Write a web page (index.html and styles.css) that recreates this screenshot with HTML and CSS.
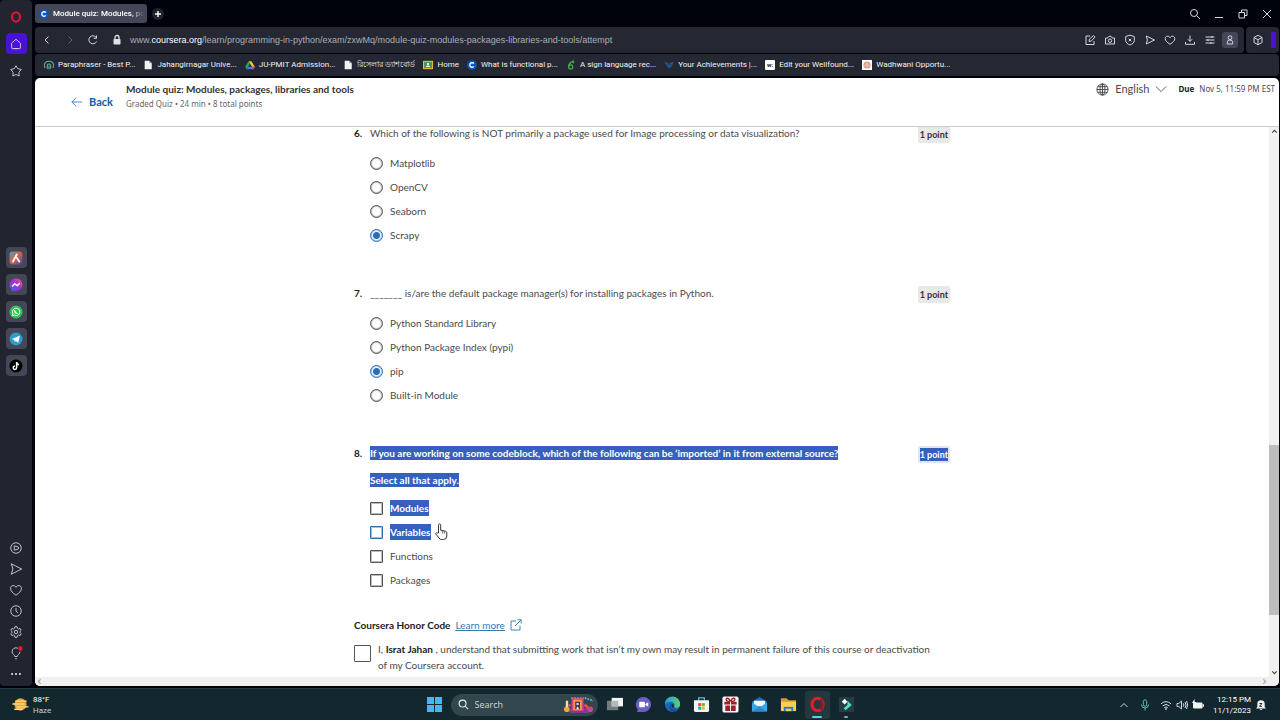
FILE: index.html
```html
<!DOCTYPE html>
<html lang="en">
<head>
  <meta charset="UTF-8">
  <meta name="viewport" content="width=device-width, initial-scale=1.0">
  <title>Module quiz: Modules, packages, libraries and tools</title>
  <link rel="stylesheet" href="styles.css">
</head>
<body>
  <div class="desktop">
    <div class="browser">
      <!-- Opera sidebar -->
      <nav class="sidebar">
        <div class="side-group">
          <button class="side-btn" aria-label="Opera"><svg viewBox="0 0 16 16"><ellipse cx="8" cy="8" rx="4.600" ry="5.300" fill="none" stroke="#d3163a" stroke-width="2.600"/></svg></button>
          <button class="side-btn active" aria-label="Home"><svg class="line" viewBox="0 0 16 16"><path d="M3 7l5-4.500 5 4.500v5.500q0 .8-.8.8H3.800q-.8 0-.8-.8zM6 13.300h4"/></svg></button>
          <button class="side-btn" aria-label="Pinboards"><svg class="line" viewBox="0 0 16 16"><path d="M8 2l2 3.300 4 1-2.700 3.100.3 4.300L8 12l-3.600 1.700.3-4.300L2 6.300l4-1z"/></svg></button>
        </div>
        <div class="side-group apps">
          <button class="side-btn app" aria-label="Aria"><svg viewBox="0 0 16 16"><defs><linearGradient id="aria" x1="0" y1="0" x2="1" y2="1"><stop offset="0" stop-color="#3aa0d8"/><stop offset=".45" stop-color="#d8663c"/><stop offset="1" stop-color="#4743b8"/></linearGradient></defs><rect x="1.500" y="1.500" width="13" height="13" rx="3" fill="url(#aria)"/><path d="M5 11.500L8.800 4.500M9 8l2.200 3.500" stroke="#fff" stroke-width="1.800" stroke-linecap="round"/></svg></button>
          <button class="side-btn app" aria-label="Messenger"><svg viewBox="0 0 16 16"><defs><linearGradient id="msg" x1="0" y1="1" x2="1" y2="0"><stop offset="0" stop-color="#3a6cf5"/><stop offset=".5" stop-color="#a42be0"/><stop offset="1" stop-color="#f5576c"/></linearGradient></defs><path d="M8 1.500c-3.800 0-6.500 2.700-6.500 6.300 0 2 .8 3.600 2.100 4.700v2l2-1.100c.8.200 1.500.3 2.400.3 3.800 0 6.500-2.500 6.500-5.900S11.800 1.500 8 1.500z" fill="url(#msg)"/><path d="M4.200 9.500l2.500-2.800 2.400 2 2.700-2.400" fill="none" stroke="#fff" stroke-width="1.500"/></svg></button>
          <button class="side-btn app" aria-label="WhatsApp"><svg viewBox="0 0 16 16"><circle cx="8" cy="8" r="6.500" fill="#2bc653"/><path d="M4.300 11.700l.6-2.100a3.700 3.700 0 1 1 1.500 1.500z" fill="none" stroke="#fff"/><path d="M6.600 6.200c0 2 1.400 3.200 3 3.400" fill="none" stroke="#fff" stroke-width="1.300"/></svg></button>
          <button class="side-btn app" aria-label="Telegram"><svg viewBox="0 0 16 16"><circle cx="8" cy="8" r="6.500" fill="#2c9ccc"/><path d="M3.800 8l8-3.300-1.500 7-2.500-1.800-1.200 1.200-.3-2z" fill="#fff"/></svg></button>
          <button class="side-btn app" aria-label="TikTok"><svg viewBox="0 0 16 16"><circle cx="8" cy="8" r="6.500" fill="#000"/><path d="M8.600 4v5.800a1.700 1.700 0 1 1-1.700-1.700M8.600 4.300c.3 1.400 1.200 2.200 2.500 2.300" fill="none" stroke="#fff" stroke-width="1.500"/></svg></button>
        </div>
        <div class="side-group tools">
          <button class="side-btn" aria-label="Player"><svg class="line" viewBox="0 0 16 16"><circle cx="8" cy="8" r="6"/><path d="M6 5.500l4.500 1.200q1 1.300 0 2.600L6 10.500z"/></svg></button>
          <button class="side-btn" aria-label="Flow"><svg class="line" viewBox="0 0 16 16"><path d="M2.500 2L14.500 8 2.500 14 4.500 8z"/></svg></button>
          <button class="side-btn" aria-label="Favourites"><svg class="line" viewBox="0 0 16 16"><path d="M8 14C4.300 11.300 1.800 9.200 1.800 6.300c0-3.800 4.600-4.600 6.200-1.400 1.600-3.200 6.200-2.400 6.200 1.400C14.200 9.200 11.700 11.300 8 14z"/></svg></button>
          <button class="side-btn" aria-label="History"><svg class="line" viewBox="0 0 16 16"><circle cx="8" cy="8" r="6"/><path d="M8 4.500V8l2 2.200"/></svg></button>
          <button class="side-btn" aria-label="Settings"><svg class="line" viewBox="0 0 16 16"><circle cx="8" cy="8" r="2"/><path d="M6.800 1.900h2.400l.4 1.900 1.200.7 1.900-.5 1.200 2-1.300 1.300v1.400l1.300 1.300-1.200 2-1.900-.5-1.200.7-.4 1.900H6.800l-.4-1.900-1.200-.7-1.900.5-1.200-2 1.300-1.300V7.300L2.100 6l1.200-2 1.900.5 1.200-.7z"/></svg></button>
          <button class="side-btn" aria-label="Tips"><svg class="line" viewBox="0 0 16 16"><path d="M6.500 11.500C6.500 10 3.500 9.500 3.500 6.500a4.500 4.500 0 0 1 6.500-4M12.500 6.500c0 3-3 3.500-3 5M6.300 12h3.400M7 14.500h2"/><circle cx="13" cy="2.800" r="2.500" fill="#e81c2e" stroke="none"/></svg></button>
          <button class="side-btn" aria-label="More"><svg viewBox="0 0 16 16" fill="#e4e6ec"><circle cx="3.500" cy="8" r="1.200"/><circle cx="8" cy="8" r="1.200"/><circle cx="12.500" cy="8" r="1.200"/></svg></button>
        </div>
      </nav>

      <div class="window">
        <header class="tab-strip">
          <button class="tab">
            <svg viewBox="0 0 12 12"><circle cx="6" cy="6" r="5.800" fill="#0b56c2"/><path d="M8.200 4.300a2.700 2.700 0 1 0 0 3.400" fill="none" stroke="#fff" stroke-width="1.600"/></svg>
            <span>Module quiz: Modules, pa</span>
          </button>
          <button class="new-tab" aria-label="New tab"><svg viewBox="0 0 12 12"><path d="M6 3v6M3 6h6" stroke="#fff" stroke-width="1.400"/></svg></button>
          <div class="win-controls">
            <button aria-label="Search tabs"><svg class="line" viewBox="0 0 12 12"><circle cx="5" cy="5" r="3.500"/><path d="M7.600 7.600L11 11"/></svg></button>
            <button aria-label="Minimize"><svg class="line" viewBox="0 0 12 12"><path d="M2 9.500h8"/></svg></button>
            <button aria-label="Restore"><svg class="line" viewBox="0 0 12 12"><path d="M2 4.500h5.500V10H2zM4.500 4.500V2H10v5.500H7.500"/></svg></button>
            <button aria-label="Close"><svg class="line" viewBox="0 0 12 12"><path d="M2 2l8 8M10 2l-8 8"/></svg></button>
          </div>
        </header>

        <div class="address-row">
          <div class="address-bar">
            <button aria-label="Back"><svg class="line" viewBox="0 0 12 12"><path d="M7.500 2.500L4 6l3.500 3.500"/></svg></button>
            <button class="dim" aria-label="Forward"><svg class="line" viewBox="0 0 12 12"><path d="M4.500 2.500L8 6 4.500 9.500"/></svg></button>
            <button aria-label="Reload"><svg class="line" viewBox="0 0 12 12"><path d="M9 3.300A4 4 0 1 0 9.500 7.500M9.500 1.500V4.300H6.700"/></svg></button>
            <svg class="lock" viewBox="0 0 12 12"><path d="M4 6V3.500a2 2 0 0 1 4 0V6" fill="none" stroke="#dfe1e7" stroke-width="1.300"/><rect x="2.500" y="5" width="7" height="5.500" rx=".8" fill="#dfe1e7"/></svg>
            <p class="url">www.<b>coursera.org</b>/learn/programming-in-python/exam/zxwMq/module-quiz-modules-packages-libraries-and-tools/attempt</p>
            <div class="address-tools">
              <button aria-label="Edit"><svg class="line" viewBox="0 0 12 12"><path d="M6 2H2v8.500h8V7M5 7.500l.5-2.500 4-3.500 1.500 1.500-3.700 4z"/></svg></button>
              <button aria-label="Snapshot"><svg class="line" viewBox="0 0 12 12"><path d="M1.500 4h2.200L5 2.300h2L8.300 4h2.200v6h-9z"/><circle cx="6" cy="6.700" r="1.700"/></svg></button>
              <button aria-label="Ad blocker"><svg class="line" viewBox="0 0 12 12"><path d="M6 1.200l4.300 1.300v4c0 2-1.800 3.500-4.300 4.500-2.500-1-4.300-2.500-4.300-4.500v-4zM4.700 4.700l2.600 2.600M7.300 4.700L4.700 7.300"/></svg></button>
              <button aria-label="Send"><svg class="line" viewBox="0 0 12 12"><path d="M2.300 2L10.500 6l-8.200 4 1-4z"/></svg></button>
              <button aria-label="Bookmark"><svg class="line" viewBox="0 0 12 12"><path d="M6 10.300C3 8.200 1.200 6.800 1.200 4.600c0-2.800 3.600-3.300 4.800-.9 1.200-2.400 4.800-1.900 4.800.9C10.800 6.800 9 8.200 6 10.300z"/></svg></button>
              <button aria-label="Downloads"><svg class="line" viewBox="0 0 12 12"><path d="M6 1.500v5.700M3.800 5.200L6 7.400l2.200-2.200M1.500 8v2.300h9V8"/></svg></button>
              <button aria-label="Easy setup"><svg class="line" viewBox="0 0 12 12"><path d="M1.500 3h9M1.500 6h9M1.500 9h9M8 2v2M4 5v2M7 8v2"/></svg></button>
              <button class="profile" aria-label="Profile"><svg class="line" viewBox="0 0 12 12"><circle cx="6" cy="3.700" r="1.900"/><path d="M3.300 10V8.200q0-2.200 2.700-2.200t2.700 2.200V10z"/></svg></button>
            </div>
          </div>
          <div class="extensions">
            <button aria-label="Extensions"><svg class="line" viewBox="0 0 12 12"><path d="M6 1.300l4 2.200v5L6 10.700 2 8.500v-5zM2 3.500l4 2.200 4-2.200M6 5.700v5"/></svg></button>
            <span class="ext-strip"></span>
          </div>
        </div>

        <nav class="bookmarks">
          <a href="#"><svg viewBox="0 0 12 12"><path d="M1.500 9.500A5 5 0 0 1 6 1.500a5 5 0 0 1 4.500 8M4 10.500V6.800a2 2 0 0 1 4 0v3.700M6 7v4" fill="none" stroke="#5fae93" stroke-width="1.300"/></svg>Paraphraser - Best P...</a>
          <a href="#"><svg viewBox="0 0 12 12"><path d="M2 1h5.500L10.500 4v7H2z" fill="#f1f2f4"/><path d="M7.500 1v3h3" fill="#9a9da6"/></svg>Jahangirnagar Unive...</a>
          <a href="#"><svg viewBox="0 0 12 12"><path d="M4.300 1.500h3.400L12 8.500H8.500z" fill="#f7c325"/><path d="M4.300 1.500L6 4.300 2 11 .2 8z" fill="#22a565"/><path d="M3.700 8.200H12L10.300 11H2z" fill="#3d7be8"/><path d="M8.500 8.200H12L10.300 11z" fill="#e3423a"/></svg>JU-PMIT Admission...</a>
          <a href="#"><svg viewBox="0 0 12 12"><path d="M2 1h5.500L10.500 4v7H2z" fill="#f1f2f4"/><path d="M7.500 1v3h3" fill="#9a9da6"/></svg><span lang="bn">রিসেলার ড্যাশবোর্ড</span></a>
          <a href="#"><svg viewBox="0 0 12 12"><path d="M0 1h12v10H0z" fill="#e9bd2c"/><path d="M1.300 2.300h9.400v7.400H1.300z" fill="#3d9a50"/><circle cx="6" cy="4.800" r="1.300" fill="#fff"/><path d="M3.300 8.500q0-2 2.700-2t2.700 2z" fill="#fff"/></svg>Home</a>
          <a href="#"><svg viewBox="0 0 12 12"><circle cx="6" cy="6" r="5.800" fill="#0b56c2"/><path d="M8.200 4.300a2.700 2.700 0 1 0 0 3.400" fill="none" stroke="#fff" stroke-width="1.600"/></svg>What is functional p...</a>
          <a href="#"><svg viewBox="0 0 12 12"><path d="M9.500 1C6 2 3.500 4.500 3 8M8 3.500l2-.8" fill="none" stroke="#43b649" stroke-width="1.500"/><circle cx="5.700" cy="8.300" r="2.500" fill="none" stroke="#43b649" stroke-width="1.400"/></svg>A sign language rec...</a>
          <a href="#"><svg viewBox="0 0 12 12"><path d="M.5 2.500L6 4l5.500-2L10 6 6.500 11 2.500 6z" fill="#1d5f9e"/><path d="M2.500 6L6 4l4 2M6 4l.5 7" stroke="#252832" stroke-width=".7" fill="none"/></svg>Your Achievements |...</a>
          <a href="#"><span class="w-icon">w:</span>Edit your Wellfound...</a>
          <a href="#"><svg viewBox="0 0 12 12"><path d="M0 0h12v12H0z" fill="#fff"/><circle cx="6" cy="6" r="4.300" fill="#dc9682"/><path d="M3 5h6M2.500 7h7M6 2v8" stroke="#f6ded6" stroke-width=".7"/></svg>Wadhwani Opportu...</a>
        </nav>

        <main class="page">
          <div class="quiz-header">
            <a class="back" href="#"><svg viewBox="0 0 14 12"><path d="M6 1L1 6l5 5M1 6h12" fill="none" stroke="#2a73cc"/></svg>Back</a>
            <div class="quiz-title">
              <h1>Module quiz: Modules, packages, libraries and tools</h1>
              <p>Graded Quiz • 24 min • 8 total points</p>
            </div>
            <div class="quiz-meta">
              <button class="language">
                <svg class="globe" viewBox="0 0 14 14"><circle cx="7" cy="7" r="6"/><ellipse cx="7" cy="7" rx="2.700" ry="6"/><path d="M1 7h12M1.900 4h10.200M1.900 10h10.200M7 1v12"/></svg>
                English
                <svg class="caret" viewBox="0 0 14 8"><path d="M1 1l6 6 6-6"/></svg>
              </button>
              <p class="due"><b>Due</b>Nov 5, 11:59 PM EST</p>
            </div>
          </div>

          <div class="scroller">
            <div class="scroll-view">
              <form class="quiz">
                <fieldset class="question">
                  <span class="number">6.</span>
                  <div class="body">
                    <p>Which of the following is NOT primarily a package used for Image processing or data visualization?</p>
                    <div class="options">
                      <label><input type="radio" name="q6">Matplotlib</label>
                      <label><input type="radio" name="q6">OpenCV</label>
                      <label><input type="radio" name="q6">Seaborn</label>
                      <label><input type="radio" name="q6" checked>Scrapy</label>
                    </div>
                  </div>
                  <span class="points">1 point</span>
                </fieldset>

                <fieldset class="question">
                  <span class="number">7.</span>
                  <div class="body">
                    <p>_______ is/are the default package manager(s) for installing packages in Python.</p>
                    <div class="options">
                      <label><input type="radio" name="q7">Python Standard Library</label>
                      <label><input type="radio" name="q7">Python Package Index (pypi)</label>
                      <label><input type="radio" name="q7" checked>pip</label>
                      <label><input type="radio" name="q7">Built-in Module</label>
                    </div>
                  </div>
                  <span class="points">1 point</span>
                </fieldset>

                <fieldset class="question">
                  <span class="number">8.</span>
                  <div class="body">
                    <p><mark>If you are working on some codeblock, which of the following can be ‘imported’ in it from external source?</mark></p>
                    <p class="hint"><mark>Select all that apply.</mark></p>
                    <div class="options checks">
                      <label><input type="checkbox" name="q8"><mark>Modules</mark></label>
                      <label class="hovered"><input type="checkbox" name="q8"><mark>Variables</mark>
                        <svg class="cursor" viewBox="0 0 14 18"><path d="M4.500 10V2.200q0-1.200 1.100-1.200t1.100 1.200v5l4.800 1q1.300.3 1.300 1.600v3.200q0 3.500-3.500 3.500H7.500q-1.500 0-2.500-1.500L1.500 10.600q.8-1.300 2-.5z" fill="#fff" stroke="#333"/><path d="M8.700 8v2.500M10.700 8.500v2" stroke="#333" stroke-width=".8"/></svg>
                      </label>
                      <label><input type="checkbox" name="q8">Functions</label>
                      <label><input type="checkbox" name="q8">Packages</label>
                    </div>
                  </div>
                  <span class="points selected"><mark>1 point</mark></span>
                </fieldset>

                <section class="honor">
                  <h2>Coursera Honor Code <a href="#">Learn more</a>
                    <svg viewBox="0 0 12 12"><path d="M6 2H1v9h9V6.500M5 7l6-6M7.500.8H11.200V4.500" fill="none" stroke="#3d87b8"/></svg>
                  </h2>
                  <label>
                    <input type="checkbox" name="honor">
                    <span>I, <b>Israt Jahan</b> , understand that submitting work that isn’t my own may result in permanent failure of this course or deactivation of my Coursera account.</span>
                  </label>
                </section>
              </form>
            </div>
            <div class="v-scroll">
              <svg viewBox="0 0 8 8"><path d="M2 5l2-2 2 2"/></svg>
              <span class="track-before"></span>
              <span class="thumb"></span>
              <span class="track-after"></span>
              <svg viewBox="0 0 8 8"><path d="M2 3l2 2 2-2"/></svg>
            </div>
          </div>
          <div class="h-scroll">
            <svg viewBox="0 0 8 8"><path d="M5 2L3 4l2 2"/></svg>
            <svg viewBox="0 0 8 8"><path d="M3 2l2 2-2 2"/></svg>
          </div>
        </main>
      </div>
    </div>

    <!-- Windows taskbar -->
    <footer class="taskbar">
      <button class="weather">
        <svg viewBox="0 0 18 18"><circle cx="9" cy="9" r="6.500" fill="#f0a030"/><path d="M4 5.500h11M1 8.500h12M5 11.500h12M3 14h8" stroke="#f9dc92" stroke-width="1.400" stroke-linecap="round"/></svg>
        <span>88°F<small>Haze</small></span>
      </button>

      <div class="dock">
        <button aria-label="Start"><svg viewBox="0 0 18 18" fill="#45b9ee"><path d="M1 1h7.500v7.500H1zM9.500 1H17v7.500H9.500zM1 9.500h7.500V17H1zM9.500 9.500H17V17H9.500z"/></svg></button>
        <label class="search">
          <svg viewBox="0 0 12 12"><circle cx="5" cy="5" r="3.800" fill="none" stroke="#e7eced" stroke-width="1.200"/><path d="M8 8l3 3" stroke="#e7eced" stroke-width="1.200"/></svg>
          <input type="text" placeholder="Search" aria-label="Search">
          <svg class="search-art" viewBox="0 0 34 18"><path d="M4 15q14-6 26 0l-3 3H8z" fill="#7a3a9c"/><path d="M9 2h13v14H9z" fill="#d6407f"/><path d="M11 4h9v11h-9z" fill="#f09a3a"/><path d="M13 6h5v8h-5z" fill="#263a5c"/><circle cx="15.500" cy="8.500" r="1.400" fill="#f3c9a0"/><path d="M14 14q1.500-6 3 0z" fill="#f4e3c0"/><circle cx="4" cy="14" r="3" fill="#f3a846"/><path d="M3 5h2.500v7H3z" fill="#f5e0a0"/><circle cx="7" cy="10" r="1.500" fill="#e04a7a"/><path d="M23 9l5 5" stroke="#ea4a4a" stroke-width="3"/><circle cx="29" cy="14" r="3" fill="#c94680"/><path d="M23 2l9 3" stroke="#4bb7b0" stroke-width="2" stroke-dasharray="2 1"/><path d="M9 2h13" stroke="#f6c14a" stroke-dasharray="1.500 1.500"/></svg>
        </label>
        <button aria-label="Task view"><svg viewBox="0 0 18 18"><path d="M1 5h12v10H1z" fill="#747b7d"/><path d="M6 2h12v9H6z" fill="#f2f3f3"/><path d="M6 5h7v6H6z" fill="#b3b8b9"/></svg></button>
        <button aria-label="Chat"><svg viewBox="0 0 18 18"><path d="M9 1a8 8 0 0 1 0 16H2l1-2.700A8 8 0 0 1 9 1z" fill="#6a61c0"/><rect x="4.500" y="6" width="6" height="6" rx="1" fill="#fff"/><path d="M11 8.500l3-2v5l-3-2z" fill="#fff"/></svg></button>
        <button aria-label="Edge"><svg viewBox="0 0 18 18"><defs><linearGradient id="edge" x1="0" y1="0" x2="1" y2="0"><stop offset="0" stop-color="#2a9be4"/><stop offset="1" stop-color="#55d26b"/></linearGradient></defs><circle cx="9" cy="9" r="8" fill="#1769c0"/><path d="M1 8a8 8 0 0 1 16 1c0 3-2.500 4-5 3.500-1.500-.3-1.200-1-.8-2C11.500 7 9 6 7 6 4 6 2 7 1 9z" fill="url(#edge)"/><path d="M8 8c-3 4 1 8 7 6-1 2-3.500 3-5.500 3C5 15.500 4.500 10 8 8z" fill="#124e96"/><path d="M8.300 8.500c1.500-.5 2.500.8 1.900 2.200-.5 1.100.3 2 1.800 2-2.500 1-5-1.500-3.700-4.200z" fill="#16303a"/></svg></button>
        <button aria-label="Store"><svg viewBox="0 0 18 18"><path d="M6 5V2h6v3" fill="none" stroke="#5bb9dc" stroke-width="1.300"/><path d="M1 4.500h16V15q0 2-2 2H3q-2 0-2-2z" fill="#f4f6f6"/><path d="M5.500 7.500H8.700v3.200H5.500z" fill="#e3542c"/><path d="M9.300 7.500h3.200v3.200H9.300z" fill="#7fb32c"/><path d="M5.500 11.300h3.200v3.200H5.500z" fill="#2d9fd9"/><path d="M9.300 11.300h3.200v3.200H9.300z" fill="#f0b72b"/></svg></button>
        <button aria-label="Rewards"><svg viewBox="0 0 18 18"><rect x=".5" y=".5" width="17" height="17" rx="2" fill="#fbf7f6"/><path d="M2.500 6h13v3h-13zM3.500 10h5v6h-5zM9.500 10h5v6h-5z" fill="#98232b"/><path d="M9 6C7 1 3.500 2 4.500 4.200 5 5.500 7 6 9 6c2 0 4-.5 4.500-1.800C14.500 2 11 1 9 6z" fill="none" stroke="#98232b" stroke-width="1.400"/><path d="M9 6v10" stroke="#fff"/></svg></button>
        <button aria-label="Mail"><svg viewBox="0 0 18 18"><path d="M1 6l8-5 8 5v10H1z" fill="#1c6fb8"/><path d="M3 5h12v6H3z" fill="#f0f6fa"/><path d="M1 7l8 5 8-5v9.500H1z" fill="#3aa7e6"/><path d="M1 16.500l8-5 8 5z" fill="#2589d0"/></svg></button>
        <button aria-label="File Explorer"><svg viewBox="0 0 18 18"><path d="M1 2.500h6l2 2h8V8H1z" fill="#d99c23"/><path d="M1 6h16v10H1z" fill="#f6cf55"/><path d="M4 11.500h10V16H4z" fill="#2e7fb8"/><path d="M6 13.500h6V16H6z" fill="#f6cf55"/></svg></button>
        <button class="running" aria-label="Opera"><svg viewBox="0 0 18 18"><ellipse cx="9" cy="9" rx="5.700" ry="6.500" fill="none" stroke="#d5202f" stroke-width="3.600"/><path d="M12 3.500q4 5.500 0 11" fill="none" stroke="#931522" stroke-width="3"/></svg></button>
        <button class="open" aria-label="Filmora"><svg viewBox="0 0 18 18"><path d="M1 1h16v16H1z" fill="#263b44"/><path d="M10 5l4.500 4.500L8 15l-2-2 4-3.500z" fill="#56e0c0"/><path d="M4 6l3-3 3 3-3 3z" fill="#f0fffb"/></svg></button>
      </div>

      <div class="tray">
        <button aria-label="Hidden icons"><svg class="line" viewBox="0 0 12 12"><path d="M2.500 8L6 4.500 9.500 8"/></svg></button>
        <button class="mic" aria-label="Microphone"><svg class="line" viewBox="0 0 12 12"><rect x="4.300" y=".8" width="3.400" height="6.500" rx="1.700"/><path d="M2.500 5.500a3.500 3.500 0 0 0 7 0M6 9v2.500"/></svg></button>
        <button class="status" aria-label="Network, volume, battery">
          <svg class="line" viewBox="0 0 12 12"><path d="M1 4.800q5-4.300 10 0M2.700 6.800q3.300-2.800 6.600 0M4.300 8.600q1.700-1.300 3.400 0"/><circle cx="6" cy="10" r=".6"/></svg>
          <svg class="line" viewBox="0 0 12 12"><path d="M1 4.500h1.800L5.500 2v8L2.800 7.500H1zM7.300 4.300q1.200 1.700 0 3.400M9 3q2 3 0 6M10.500 2q2.400 4 0 8"/></svg>
          <svg viewBox="0 0 12 12" fill="#eef2f3"><rect x="1" y="3.500" width="9.500" height="6" rx="1.200"/><path d="M10.500 5.300H12v2.400h-1.500zM2.500 0L0 4h1.800L1 6.500 4.500 3H2.700z"/></svg>
        </button>
        <button class="clock">
          <span class="time"><span>12:15 PM</span><span>11/1/2023</span></span>
          <svg viewBox="0 0 12 12"><path d="M1 9.500L2.300 8V5a3.700 3.700 0 0 1 7.400 0v3L11 9.500zM4.500 10h3q-1.500 2-3 0z" fill="#eef2f3"/><path d="M4.500 4.500H7L4.500 7.300H7" fill="none" stroke="#18292f"/></svg>
        </button>
      </div>
    </footer>
  </div>
</body>
</html>
```
FILE: styles.css
```css
* {
  box-sizing: border-box;
}
body {
  margin: 0;
  background: #01030c;
  font-family: Lato, sans-serif;
  font-size: 10px;
  line-height: 16px;
  color: #4a4a4a;
}
h1, h2, p {
  margin: 0;
}
button {
  display: flex;
  align-items: center;
  justify-content: center;
  padding: 0;
  border: none;
  background: none;
  color: inherit;
  font: inherit;
  cursor: pointer;
}
svg {
  display: block;
  flex: none;
}
.line {
  fill: none;
  stroke: #d5d8e0;
}
.desktop {
  display: flex;
  flex-direction: column;
  height: 100vh;
  overflow: hidden;
}
.browser {
  flex: 1;
  display: flex;
  gap: 3px;
  min-height: 0;
  padding: 0 1px 2px 0;
}

/* sidebar */
.sidebar {
  display: flex;
  flex-direction: column;
  justify-content: space-between;
  align-items: center;
  width: 32px;
  padding: 6px 0 2px;
  background: #22252f;
  border-radius: 4px;
}
.side-group {
  display: flex;
  flex-direction: column;
  gap: 6px;
}
.side-btn {
  width: 21px;
  height: 21px;
  border-radius: 4px;
}
.side-btn svg {
  width: 14px;
  height: 14px;
}
.side-btn.active {
  background: #4913d6;
}
.side-btn.app {
  background: #434756;
}
.apps {
  padding-top: 5px;
}
.apps .side-btn svg {
  width: 16px;
  height: 16px;
}
.tools {
  gap: 0;
}

/* browser chrome */
.window {
  flex: 1;
  display: flex;
  flex-direction: column;
  min-width: 0;
}
.tab-strip {
  display: flex;
  align-items: center;
  gap: 5px;
  height: 27px;
  font-family: Roboto, sans-serif;
  font-size: 8px;
  font-weight: 500;
}
.tab {
  justify-content: flex-start;
  gap: 4px;
  width: 112px;
  height: 19px;
  padding: 0 3px 0 4px;
  background: #434758;
  border-radius: 3px;
  color: #fff;
}
.tab svg {
  width: 10px;
  height: 10px;
}
.tab span {
  white-space: nowrap;
  mask-image: linear-gradient(to right, #000 85%, transparent);
}
.new-tab {
  width: 12px;
  height: 12px;
  border-radius: 50%;
  background: #20232d;
}
.new-tab svg {
  width: 12px;
  height: 12px;
}
.win-controls {
  display: flex;
  margin-left: auto;
}
.win-controls button {
  width: 24px;
}
.win-controls svg {
  width: 12px;
  height: 12px;
}
.address-row {
  display: flex;
  gap: 2px;
}
.address-bar {
  flex: 1;
  display: flex;
  align-items: center;
  height: 26px;
  padding: 0 6px 0 0;
  background: #252832;
  border-radius: 4px;
}
.address-row svg {
  width: 12px;
  height: 12px;
}
.address-bar > button {
  width: 23px;
}
.address-bar .dim {
  opacity: .35;
}
.address-bar .lock {
  margin: 0 7px;
}
.url {
  font-family: "Liberation Sans", sans-serif;
  font-size: 9px;
  color: #a9adb8;
  white-space: nowrap;
}
.url b {
  font-weight: 400;
  color: #fff;
}
.address-tools {
  display: flex;
  margin-left: auto;
}
.address-tools button {
  width: 20px;
  height: 16px;
}
.address-tools .profile {
  width: 16px;
  margin-left: 2px;
  background: #434758;
  border-radius: 3px;
}
.extensions {
  display: flex;
  align-items: center;
  justify-content: space-between;
  width: 33px;
  padding: 0 3px 0 6px;
  background: #252832;
  border-radius: 4px;
}
.ext-strip {
  width: 5px;
  height: 16px;
  background: #4913d6;
}
.bookmarks {
  display: flex;
  align-items: center;
  gap: 8px;
  height: 22px;
  margin: 1px 0 2px;
  padding-left: 9px;
  background: #252832;
  border-radius: 4px;
  font-family: Roboto, sans-serif;
  font-size: 8px;
}
.bookmarks a {
  display: flex;
  align-items: center;
  gap: 4px;
  color: #f1f2f5;
  text-decoration: none;
  white-space: nowrap;
}
.bookmarks svg {
  width: 10px;
  height: 10px;
}
.w-icon {
  width: 10px;
  height: 10px;
  background: #fff;
  border-radius: 1px;
  color: #222;
  font-size: 6px;
  font-weight: 700;
  line-height: 9px;
  text-align: center;
}

/* page */
.page {
  flex: 1;
  display: flex;
  flex-direction: column;
  min-height: 0;
  background: #fff;
  border-radius: 5px;
  overflow: hidden;
}
.quiz-header {
  display: flex;
  align-items: flex-start;
  height: 49px;
  padding: 3px 4px 0 36px;
  border-bottom: 1px solid #ccc;
}
.back {
  display: flex;
  align-items: center;
  gap: 6px;
  padding-top: 13px;
  color: #1257b0;
  font-size: 11px;
  font-weight: 700;
  text-decoration: none;
}
.back svg {
  width: 12px;
  height: 12px;
}
.quiz-title {
  padding-left: 13px;
}
.quiz-title h1 {
  font-size: 10px;
  color: #333;
}
.quiz-title p {
  font-family: "Noto Sans", sans-serif;
  font-size: 8px;
  line-height: 14px;
  color: #666;
}
.quiz-meta {
  display: flex;
  gap: 11px;
  margin-left: auto;
}
.language {
  gap: 6px;
  font-size: 11px;
}
.language svg {
  fill: none;
  stroke: #444;
}
.globe {
  width: 13px;
  height: 13px;
}
.caret {
  width: 12px;
  height: 8px;
}
.due {
  display: flex;
  gap: 5px;
  font-family: "Noto Sans", sans-serif;
  font-size: 8px;
}
.due b {
  color: #222;
}
.scroller {
  flex: 1;
  display: flex;
  min-height: 0;
}
.scroll-view {
  flex: 1;
  overflow: hidden;
}
.quiz {
  max-width: 596px;
  margin: -2px auto 0;
}
.question {
  display: flex;
  align-items: flex-start;
  margin: 0 0 38px;
  padding: 0;
  border: none;
}
.number {
  width: 16px;
  color: #222;
  font-weight: 700;
}
.body {
  flex: 1;
}
.points {
  margin-top: 1px;
  padding: 0 2px;
  background: #e8e8e8;
  border-radius: 2px;
  color: #333;
  font-size: 9px;
  font-weight: 700;
  line-height: 17px;
}
.options {
  padding-top: 10px;
}
.options.checks {
  padding-top: 8px;
}
.options label {
  display: flex;
  align-items: center;
  gap: 7px;
  width: fit-content;
  height: 24px;
}
input[type="radio"],
input[type="checkbox"] {
  appearance: none;
  width: 13px;
  height: 13px;
  margin: 0;
  border: 1px solid #555;
  box-shadow: inset 0 0 0 1px #bbb;
  background: #fff;
}
input[type="radio"] {
  border-radius: 50%;
}
input[type="radio"]:checked {
  border-color: #2a6fb8;
  box-shadow: inset 0 0 0 1px #a9c8e6;
  background: radial-gradient(circle, #2a6fb8 3px, #fff 4px);
}
input[type="checkbox"] {
  border-radius: 1px;
}
.hovered input[type="checkbox"] {
  border-color: #2a6fa8;
}
.hint {
  padding-top: 11px;
}
mark {
  padding: 1px 0;
  background: #3560bd;
  color: #fff;
  font-weight: 700;
}
.options mark {
  padding: 0;
}
.points.selected {
  background: #dfe5f2;
}
.hovered {
  position: relative;
}
.cursor {
  position: absolute;
  top: 3px;
  left: 64px;
  width: 14px;
  height: 18px;
}
.honor {
  margin-top: -13px;
}
.honor h2 {
  display: flex;
  align-items: center;
  gap: 5px;
  margin-bottom: 8px;
  color: #222;
  font-size: 10px;
}
.honor h2 svg {
  width: 12px;
  height: 12px;
}
.honor a {
  color: #2f7db0;
  font-weight: 400;
}
.honor label {
  display: flex;
  align-items: flex-start;
  gap: 7px;
  padding-right: 16px;
}
.honor input[type="checkbox"] {
  flex: none;
  width: 17px;
  height: 17px;
  margin-top: 4px;
  box-shadow: none;
}
.honor b {
  color: #222;
}
.v-scroll {
  display: flex;
  flex-direction: column;
  align-items: center;
  width: 10px;
  background: #f0f0ef;
}
.v-scroll svg,
.h-scroll svg {
  width: 9px;
  height: 9px;
  fill: none;
  stroke: #444;
}
.track-before {
  flex: 309;
}
.thumb {
  flex: 170;
  width: 10px;
  background: #bdbdbd;
}
.track-after {
  flex: 53;
}
.h-scroll {
  display: flex;
  justify-content: space-between;
  height: 9px;
  padding-right: 10px;
  background: #f0f0ef;
}
.h-scroll svg {
  stroke: #aaa;
}

/* taskbar */
.taskbar {
  display: grid;
  grid-template-columns: 1fr auto 1fr;
  align-items: center;
  height: 32px;
  background: #13272e;
  border-top: 1px solid #243940;
  font-family: Roboto, sans-serif;
  font-size: 8px;
  line-height: 11px;
  color: #fff;
}
.weather {
  justify-self: start;
  gap: 4px;
  padding-left: 12px;
  text-align: left;
}
.weather svg {
  width: 17px;
  height: 17px;
}
.weather small {
  display: block;
  font-size: 8px;
  color: #c4cccf;
}
.dock {
  display: flex;
  align-items: center;
  gap: 4px;
}
.dock button {
  width: 25px;
  height: 28px;
  border-radius: 3px;
}
.dock button svg {
  width: 17px;
  height: 17px;
}
.search {
  display: flex;
  align-items: center;
  gap: 6px;
  width: 147px;
  height: 22px;
  padding: 0 3px 0 7px;
  background: #32464e;
  border-radius: 11px;
}
.search > svg {
  width: 11px;
  height: 11px;
}
.search input {
  flex: 1;
  min-width: 0;
  padding: 0;
  border: none;
  outline: none;
  background: none;
  color: #fff;
  font-family: "Open Sans", sans-serif;
  font-size: 9px;
}
.search input::placeholder {
  color: #d0d7d9;
}
.search .search-art {
  width: 32px;
  height: 17px;
}
.dock .running,
.dock .open {
  position: relative;
}
.dock .running {
  background: #24383e;
}
.running::after,
.open::after {
  content: "";
  position: absolute;
  bottom: 1px;
  width: 10px;
  height: 2px;
  border-radius: 1px;
  background: #58d3d8;
}
.open::after {
  width: 4px;
  background: #96a2a6;
}
.tray {
  display: flex;
  align-items: center;
  justify-self: end;
  gap: 9px;
  padding-right: 13px;
}
.tray svg {
  width: 12px;
  height: 12px;
}
.mic .line {
  stroke: #4fc3a8;
}
.status {
  gap: 4px;
}
.clock {
  gap: 4px;
}
.time {
  display: flex;
  flex-direction: column;
  align-items: flex-end;
}
```
